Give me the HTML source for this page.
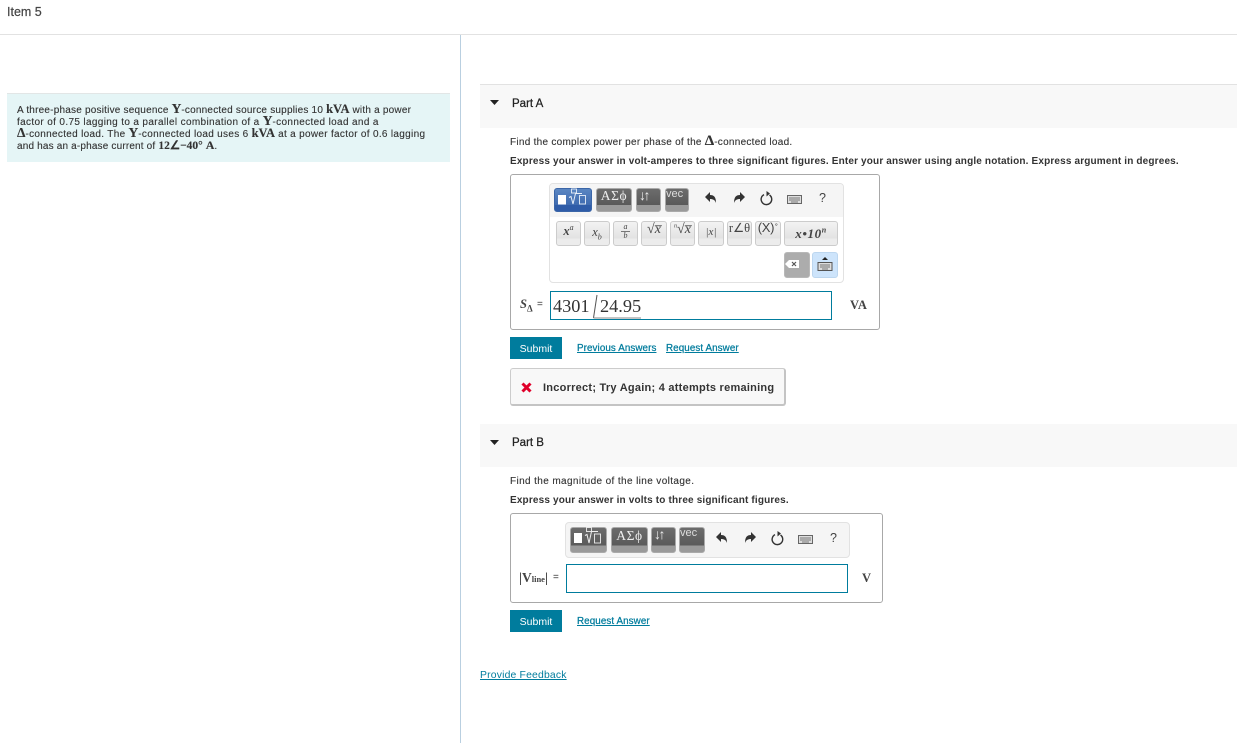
<!DOCTYPE html>
<html><head><meta charset="utf-8">
<style>
html,body{margin:0;padding:0;background:#fff;width:1237px;height:743px;overflow:hidden}
body{position:relative;font-family:"Liberation Sans",sans-serif;color:#333}
.a{position:absolute;white-space:nowrap}
.s{font-family:"Liberation Serif",serif}
.b{font-family:"Liberation Serif",serif;font-weight:bold}
.m{font-family:"Liberation Serif",serif;font-weight:bold;font-size:13.5px;letter-spacing:0;line-height:0}
.t{font-size:10px;letter-spacing:.25px;line-height:12px;color:#333;-webkit-text-stroke:.12px #333}
.link{color:#007c9d;text-decoration:underline;font-size:9.8px;letter-spacing:.1px;-webkit-text-stroke:.25px #007c9d;line-height:12px}
.sub{background:#007c9d;color:#fff;font-size:10.5px;text-align:center;width:52px;height:22px;line-height:24px}
.tb{position:absolute;box-sizing:border-box;height:25px;border:1px solid #ccc;border-radius:3px;background:linear-gradient(#f3f3f3 0,#e2e2e2 72%,#ececec 72%,#ececec 100%);font-family:"Liberation Serif",serif;font-style:italic;color:#444;text-align:center;overflow:hidden;font-size:12px;line-height:18px}
.db{position:absolute;box-sizing:border-box;border:1px solid #aaa;border-radius:3px;background:linear-gradient(#6c6c6c 0,#5a5a5a 72%,#9a9a9a 72%,#9a9a9a 100%);color:#eee;overflow:hidden;height:24px;text-align:center}
.box{position:absolute;box-sizing:border-box;border:1px solid #a8a8a8;border-radius:3px;background:#fff}
.tbar{position:absolute;box-sizing:border-box;border:1px solid #e2e2e2;border-radius:4px;background:#fff;overflow:hidden}
.inp{position:absolute;box-sizing:border-box;border:1px solid #007c9d;background:#fff}
svg{position:absolute;overflow:visible}
</style></head><body>
<div class="a" style="left:7px;top:5px;font-size:12.5px;color:#444;line-height:14px;-webkit-text-stroke:.2px #444">Item 5</div>
<div class="a" style="left:0;top:34px;width:1237px;height:1px;background:#e2e2e2"></div>
<div class="a" style="left:460px;top:35px;width:1px;height:708px;background:#b9cfe0"></div>

<div class="a" style="left:7px;top:93px;width:443px;height:69px;background:#e5f5f6;border-top:1px solid #e2e6e6;box-sizing:border-box"></div>
<div class="a t" style="left:17px;top:105px;letter-spacing:.21px">A three-phase positive sequence <span class="m">Y</span>-connected source supplies 10 <span class="m" style="font-size:12.5px">kVA</span> with a power</div>
<div class="a t" style="left:17px;top:117px;letter-spacing:.35px">factor of 0.75 lagging to a parallel combination of a <span class="m">Y</span>-connected load and a</div>
<div class="a t" style="left:17px;top:129px;letter-spacing:.31px"><span class="m">Δ</span>-connected load. The <span class="m">Y</span>-connected load uses 6 <span class="m" style="font-size:12.5px">kVA</span> at a power factor of 0.6 lagging</div>
<div class="a t" style="left:17px;top:141px;letter-spacing:.17px">and has an a-phase current of <span class="m" style="font-size:11.5px">12∠−40°</span> <span class="m" style="font-size:12px">A</span>.</div>

<!-- Part A -->
<div class="a" style="left:480px;top:84px;width:757px;height:44px;background:#f8f8f8;border-top:1px solid #e2e2e2;box-sizing:border-box"></div>
<svg style="left:490px;top:100px" width="9" height="5"><path d="M0 0H9L4.5 5Z" fill="#222"/></svg>
<div class="a" style="left:512px;top:97px;font-size:11.5px;color:#222;line-height:14px;-webkit-text-stroke:.25px #222">Part A</div>
<div class="a t" style="left:510px;top:137px;letter-spacing:.27px">Find the complex power per phase of the <span class="m" style="font-size:15px">Δ</span>-connected load.</div>
<div class="a t" style="left:510px;top:156px;font-weight:bold;letter-spacing:.16px;-webkit-text-stroke:0">Express your answer in volt-amperes to three significant figures. Enter your answer using angle notation. Express argument in degrees.</div>

<div class="box" style="left:510px;top:174px;width:370px;height:156px"></div>
<div class="tbar" style="left:549px;top:183px;width:295px;height:100px">
 <div style="height:33px;background:#f5f5f5"></div>
</div>
<div class="db" style="left:554px;top:188px;width:38px;background:linear-gradient(#5a86c2 0,#3f6bb0 72%,#2f5ca8 72%,#2f5ca8 100%);border-color:#3b66a8"></div>
<svg style="left:554px;top:188px" width="38" height="24" viewBox="0 0 38 24"><rect x="4" y="7" width="8" height="9.500" fill="#fff"/><path d="M15 9.500L17 8.500L19 16L21.500 5.500H28" fill="none" stroke="#e6eef8" stroke-width="1"/><rect x="17.500" y="1" width="5" height="4" fill="none" stroke="#e6eef8" stroke-width=".9"/><rect x="25.500" y="7.500" width="6" height="8.500" fill="none" stroke="#e6eef8" stroke-width=".9"/></svg>
<div class="db s" style="left:596px;top:188px;width:36px;font-size:13.5px;line-height:14px;letter-spacing:.6px;white-space:nowrap">ΑΣϕ</div>
<div class="db" style="left:636px;top:188px;width:25px;font-size:14px;line-height:13px;text-align:left;padding-left:2px;letter-spacing:-2.500px">↓↑</div>
<div class="db" style="left:665px;top:188px;width:24px;font-size:11px;line-height:11px;text-align:left;color:#ddd;white-space:nowrap">vec</div>

<svg style="left:705px;top:192px" width="13" height="12" viewBox="0 0 13 12"><path d="M0 5L5 0V3C9 3 11 5 11 11C10 8 8 7 5 7V10Z" fill="#333"/></svg>
<svg style="left:733px;top:192px" width="13" height="12" viewBox="0 0 13 12"><path d="M12 5L7 0V3C3 3 1 5 1 11C2 8 4 7 7 7V10Z" fill="#333"/></svg>
<svg style="left:760px;top:191px" width="13" height="14" viewBox="0 0 13 14"><path d="M4 3.600A5.300 5.300 0 1 0 9.500 4" fill="none" stroke="#333" stroke-width="1.400"/><path d="M6.500 0V5.500L10 2.500Z" fill="#333"/></svg>
<svg style="left:787px;top:195px" width="16" height="10" viewBox="0 0 16 10"><rect x=".5" y=".5" width="14" height="8" fill="#ddd" stroke="#666"/><path d="M2 3H13M2 5H13M4 7H11" stroke="#777" stroke-width="1"/></svg>
<div class="a" style="left:819px;top:191px;font-size:12.500px;color:#444;line-height:14px">?</div>

<div class="tb" style="left:556px;top:221px;width:25px;font-weight:bold;font-size:12.500px">x<sup style="font-size:8px;line-height:0;font-weight:normal">a</sup></div>
<div class="tb" style="left:584px;top:221px;width:26px;line-height:20px;font-size:12.500px">x<sub style="font-size:8px;line-height:0">b</sub></div>
<div class="tb" style="left:613px;top:221px;width:25px;font-size:8px;line-height:8px"><span style="display:block;width:9px;margin:1px auto 0;border-bottom:1px solid #777">a</span>b</div>
<div class="tb" style="left:641px;top:221px;width:26px;font-size:14px;line-height:15px;white-space:nowrap">√x̅</div>
<div class="tb" style="left:670px;top:221px;width:25px;font-size:14px;line-height:15px;white-space:nowrap"><sup style="font-size:6px;line-height:0">n</sup>√x̅</div>
<div class="tb" style="left:698px;top:221px;width:26px;line-height:20px;font-size:11px">|x|</div>
<div class="tb" style="left:727px;top:221px;width:25px;font-style:normal;font-size:12.500px;line-height:12px;white-space:nowrap">r∠θ</div>
<div class="tb" style="left:755px;top:221px;width:26px;font-style:normal;font-size:13px;line-height:12px;white-space:nowrap;font-family:'Liberation Sans',sans-serif;letter-spacing:-.3px">(X)<sup style="font-size:7px;line-height:0">∘</sup></div>
<div class="tb" style="left:784px;top:221px;width:54px;font-weight:bold;line-height:24px;font-size:13px;letter-spacing:.6px">x•10<sup style="font-size:8px;line-height:0">n</sup></div>

<div class="a" style="left:784px;top:252px;width:26px;height:26px;background:#acacac;border-radius:3px;box-sizing:border-box;border:1px solid #b8b8b8"></div>
<svg style="left:785px;top:259px" width="15" height="10" viewBox="0 0 15 10"><path d="M4 1H14V9H4L0 5Z" fill="#fff"/><path d="M7 3L11 7M11 3L7 7" stroke="#555" stroke-width="1.200"/></svg>
<div class="a" style="left:812px;top:252px;width:26px;height:26px;background:#cde4fb;border-radius:3px;box-sizing:border-box;border:1px solid #bcd6ef"></div>
<svg style="left:817px;top:257px" width="16" height="15" viewBox="0 0 16 15"><path d="M5 3L8 0L11 3Z" fill="#222"/><rect x="1" y="5.500" width="14" height="8" fill="#ddd" stroke="#555"/><path d="M3 8H13M3 10H13M5 12H11" stroke="#777" stroke-width="1"/></svg>

<div class="a s" style="left:520px;top:297px;font-size:12.500px;font-style:italic;font-weight:bold;color:#444;line-height:14px">S<sub style="font-size:9px;line-height:0;font-style:normal">Δ</sub></div>
<div class="a" style="left:537px;top:298px;font-size:10px;color:#333;line-height:14px">=</div>
<div class="inp" style="left:550px;top:291px;width:282px;height:29px"></div>
<div class="a s" style="left:553px;top:295px;font-size:18.300px;line-height:22px;color:#333">4301</div>
<svg style="left:592px;top:294px" width="52" height="25"><path d="M1.500 24L5 1" stroke="#555" fill="none"/><path d="M1.500 24H49" stroke="#888" fill="none"/></svg>
<div class="a s" style="left:600px;top:295px;font-size:18.300px;line-height:22px;color:#333">24.95</div>
<div class="a b" style="left:850px;top:298px;font-size:12.500px;line-height:14px;letter-spacing:.5px;color:#444">VA</div>

<div class="a sub" style="left:510px;top:337px">Submit</div>
<div class="a link" style="left:577px;top:343px">Previous Answers</div>
<div class="a link" style="left:666px;top:343px">Request Answer</div>

<div class="a" style="left:510px;top:368px;width:276px;height:38px;box-sizing:border-box;background:#f8f8f8;border:1px solid #ccc;border-right:2px solid #c4c4c4;border-bottom:2px solid #c4c4c4;border-radius:3px"></div>
<svg style="left:521px;top:382px" width="11" height="11" viewBox="0 0 11 11"><path d="M1.500 1.500L9.500 9.500M9.500 1.500L1.500 9.500" stroke="#e0002a" stroke-width="3"/></svg>
<div class="a" style="left:543px;top:381px;font-size:11px;font-weight:bold;color:#333;line-height:14px;letter-spacing:.25px">Incorrect; Try Again; 4 attempts remaining</div>

<!-- Part B -->
<div class="a" style="left:480px;top:424px;width:757px;height:43px;background:#f8f8f8"></div>
<svg style="left:490px;top:440px" width="9" height="5"><path d="M0 0H9L4.500 5Z" fill="#222"/></svg>
<div class="a" style="left:512px;top:436px;font-size:11.500px;color:#222;line-height:14px;-webkit-text-stroke:.25px #222">Part B</div>
<div class="a t" style="left:510px;top:476px;letter-spacing:.38px">Find the magnitude of the line voltage.</div>
<div class="a t" style="left:510px;top:495px;font-weight:bold;letter-spacing:.16px;-webkit-text-stroke:0">Express your answer in volts to three significant figures.</div>

<div class="box" style="left:510px;top:513px;width:373px;height:90px"></div>
<div class="a" style="left:565px;top:522px;width:285px;height:36px;background:#f5f5f5;border:1px solid #e2e2e2;border-radius:4px;box-sizing:border-box"></div>
<div class="db" style="left:570px;top:527px;width:37px;height:26px"></div>
<svg style="left:570px;top:527px" width="37" height="26" viewBox="0 0 37 26"><rect x="4" y="6" width="8" height="10" fill="#fff"/><path d="M15 8.500L17 7.500L19 16L21.500 4.500H28" fill="none" stroke="#eee" stroke-width="1"/><rect x="16.500" y=".5" width="5" height="4" fill="none" stroke="#eee" stroke-width=".9"/><rect x="24.500" y="7" width="6" height="9" fill="none" stroke="#eee" stroke-width=".9"/></svg>
<div class="db s" style="left:611px;top:527px;width:37px;height:26px;font-size:13.500px;line-height:15px;letter-spacing:.6px;white-space:nowrap">ΑΣϕ</div>
<div class="db" style="left:651px;top:527px;width:25px;height:26px;font-size:14px;line-height:13px;text-align:left;padding-left:2px;letter-spacing:-2.500px">↓↑</div>
<div class="db" style="left:679px;top:527px;width:26px;height:26px;font-size:11px;line-height:11px;text-align:left;color:#ddd;white-space:nowrap">vec</div>

<svg style="left:716px;top:532px" width="13" height="12" viewBox="0 0 13 12"><path d="M0 5L5 0V3C9 3 11 5 11 11C10 8 8 7 5 7V10Z" fill="#333"/></svg>
<svg style="left:744px;top:532px" width="13" height="12" viewBox="0 0 13 12"><path d="M12 5L7 0V3C3 3 1 5 1 11C2 8 4 7 7 7V10Z" fill="#333"/></svg>
<svg style="left:771px;top:531px" width="13" height="14" viewBox="0 0 13 14"><path d="M4 3.600A5.300 5.300 0 1 0 9.500 4" fill="none" stroke="#333" stroke-width="1.400"/><path d="M6.500 0V5.500L10 2.500Z" fill="#333"/></svg>
<svg style="left:798px;top:535px" width="16" height="10" viewBox="0 0 16 10"><rect x=".5" y=".5" width="14" height="8" fill="#ddd" stroke="#666"/><path d="M2 3H13M2 5H13M4 7H11" stroke="#777" stroke-width="1"/></svg>
<div class="a" style="left:830px;top:531px;font-size:12.500px;color:#444;line-height:14px">?</div>

<div class="a b" style="left:519px;top:571px;font-size:13.500px;line-height:14px;color:#444">|V<span style="font-size:8.500px">line</span>|</div>
<div class="a" style="left:553px;top:571px;font-size:10px;line-height:14px">=</div>
<div class="inp" style="left:566px;top:564px;width:282px;height:29px"></div>
<div class="a b" style="left:862px;top:571px;font-size:12.500px;line-height:14px;color:#444">V</div>

<div class="a sub" style="left:510px;top:610px">Submit</div>
<div class="a link" style="left:577px;top:616px">Request Answer</div>

<div class="a" style="left:480px;top:669px;font-size:10.400px;letter-spacing:.18px;color:#007c9d;text-decoration:underline;line-height:13px">Provide Feedback</div>
</body></html>
